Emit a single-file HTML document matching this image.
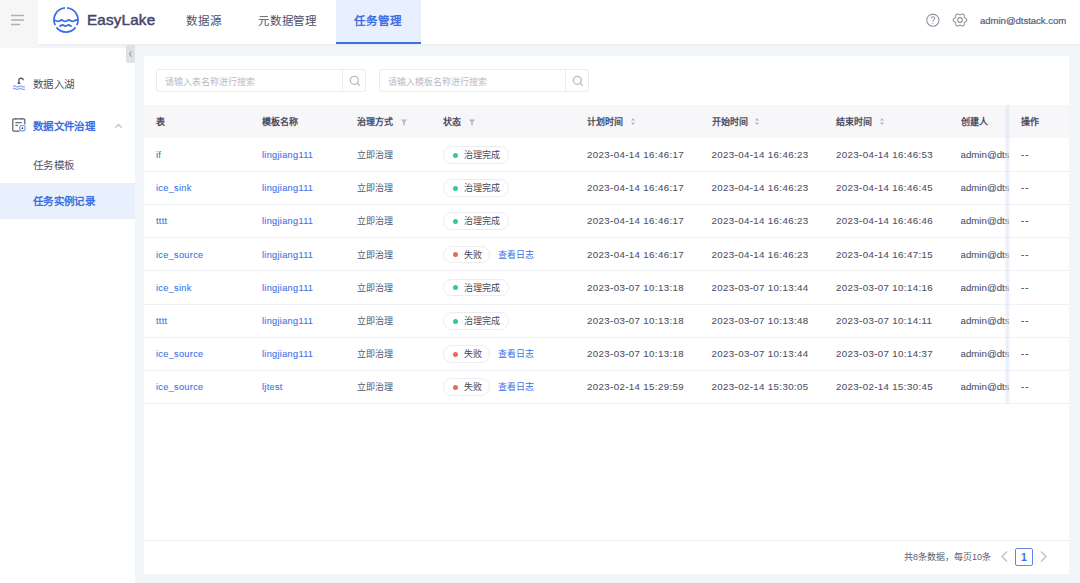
<!DOCTYPE html>
<html lang="zh-CN">
<head>
<meta charset="utf-8">
<style>
*{margin:0;padding:0;box-sizing:border-box;}
html,body{width:1080px;height:583px;overflow:hidden;}
body{background:#f2f6f9;font-family:"Liberation Sans",sans-serif;position:relative;color:#3d3f52;}
.abs{position:absolute;white-space:nowrap;}
#hdr{position:absolute;left:0;top:0;width:1080px;height:44px;background:#fff;}
#hamb{position:absolute;left:0;top:0;width:38px;height:47px;background:#f6f6f7;}
#hamb i{position:absolute;left:11px;height:1.5px;background:#b0b2bb;border-radius:1px;}
.nav{position:absolute;top:0;height:44px;line-height:42.5px;font-size:11.5px;letter-spacing:0.75px;font-weight:500;color:#4f5165;}
#side{position:absolute;left:0;top:48px;width:135px;height:535px;background:#fff;}
#coll{position:absolute;left:126px;top:44.7px;width:9.3px;height:18px;background:#dfe0e6;border-radius:2px;}
#card{position:absolute;left:144px;top:56px;width:925px;height:518px;background:#fff;}
.inp{position:absolute;top:68.5px;height:23.5px;width:210px;border:1px solid #ebecf0;border-radius:3px;background:#fff;}
.inp .ph{position:absolute;left:8px;top:1px;line-height:22px;font-size:9px;font-weight:500;color:#b9bbc5;}
.inp .btn{position:absolute;right:0;top:0;width:23px;height:21.5px;border-left:1px solid #ebecf0;}
#thead{position:absolute;left:144px;top:105px;width:925px;height:33px;background:#f7f7f9;}
.th{position:absolute;font-size:9px;font-weight:bold;color:#494c62;line-height:34px;top:105px;}
.row{position:absolute;left:144px;width:925px;height:33.8px;border-bottom:1px solid #f0f1f4;}
.td{position:absolute;font-size:9.2px;letter-spacing:0.3px;line-height:34px;color:#45475a;white-space:nowrap;-webkit-text-stroke:0.1px currentColor;}
.cn{font-size:9px;letter-spacing:0;font-weight:500;color:#53556a;-webkit-text-stroke:0;}
.blue{color:#3f72e6;}
.tag{position:absolute;top:8px;height:17.5px;border:1px solid #ececf0;border-radius:9px;background:#fff;}
.tag i{position:absolute;left:8.8px;top:5.7px;width:5px;height:5px;border-radius:2.5px;}
.tag span{position:absolute;left:19.5px;top:1px;line-height:15.5px;font-size:9px;font-weight:500;color:#45475c;}
.dt{font-size:9.7px;letter-spacing:0.37px;color:#4e5066;-webkit-text-stroke:0.08px #4e5066;}
.clip{width:48px;overflow:hidden;letter-spacing:0px;}
.side-t{font-size:10.5px;letter-spacing:0.35px;line-height:18px;font-weight:500;}
</style>
</head>
<body>
<div id="hdr"></div>
<div class="abs" style="left:0;top:44px;width:1080px;height:3px;background:linear-gradient(#eaeef1,rgba(242,246,249,0))"></div>
<div id="hamb"><svg style="position:absolute;left:0;top:0" width="38" height="40" viewBox="0 0 38 40"><g stroke="#adafb8" stroke-width="1.5" stroke-linecap="round"><path d="M11.7 15.5 H23.3"/><path d="M11.7 20 H23.3"/><path d="M11.7 24.6 H19.3"/></g></svg></div>

<!-- logo -->
<svg class="abs" style="left:50px;top:4px" width="32" height="32" viewBox="0 0 32 32">
  <g fill="none" stroke="#3a6fe6" stroke-width="1.8" stroke-linecap="butt">
    <path d="M14.95 3.95 A12.05 12.05 0 0 0 5.15 21.2"/>
    <path d="M17.05 3.95 A12.05 12.05 0 0 1 26.85 21.2"/>
    <path d="M6.5 23.4 A12.05 12.05 0 0 0 25.5 23.4"/>
    <path d="M4 16.2 C5.4 16 6.45 17.4 7.8 17.4 S10.2 16 11.5 16 S14 17.4 15.2 17.4 S17.6 16 18.9 16 S21.3 17.4 22.6 17.4 S25 16 26.3 16 S27.5 16.3 28 16.6"/>
    <path d="M9.4 22.2 C10.5 22.2 11.5 21 12.6 21 S14.3 22.2 15.4 22.2 S17.4 21 18.5 21 S20.6 22.2 21.7 22.2"/>
  </g>
</svg>
<div class="abs" style="left:87px;top:9.5px;font-size:15.2px;letter-spacing:0.2px;line-height:20px;font-weight:normal;color:#44476b;-webkit-text-stroke:0.5px #44476b;">EasyLake</div>

<div class="nav" style="left:186px">数据源</div>
<div class="nav" style="left:258px">元数据管理</div>
<div class="abs" style="left:336px;top:0;width:85px;height:44px;background:#e9f0fd;border-bottom:2px solid #3f6fe4;"></div>
<div class="nav" style="left:354px;color:#3f6fe2;font-weight:bold;letter-spacing:1px">任务管理</div>

<!-- right header -->
<svg class="abs" style="left:925px;top:12px" width="16" height="16" viewBox="0 0 16 16">
  <circle cx="7.85" cy="8.2" r="6.1" fill="none" stroke="#9597a3" stroke-width="1.1"/>
  <path d="M6.1 6.4 C6.2 5.3 7 4.7 8 4.7 C9.1 4.7 9.8 5.4 9.8 6.3 C9.8 7.2 9.1 7.6 8.5 8.1 C8.1 8.4 7.9 8.8 7.9 9.5" fill="none" stroke="#9597a3" stroke-width="1.1"/>
  <circle cx="7.85" cy="11.2" r="0.65" fill="#9597a3"/>
</svg>
<svg class="abs" style="left:952px;top:12px" width="16" height="16" viewBox="0 0 16 16">
  <path d="M14.75 8.00 L14.72 8.29 L14.62 8.58 L14.47 8.85 L14.28 9.11 L14.05 9.34 L13.80 9.55 L13.54 9.75 L13.29 9.92 L13.05 10.09 L12.85 10.26 L12.68 10.44 L12.55 10.62 L12.45 10.83 L12.38 11.07 L12.34 11.33 L12.31 11.62 L12.28 11.92 L12.24 12.24 L12.18 12.57 L12.10 12.88 L11.98 13.18 L11.81 13.45 L11.61 13.67 L11.38 13.85 L11.11 13.96 L10.81 14.03 L10.50 14.03 L10.18 13.99 L9.86 13.91 L9.55 13.80 L9.26 13.67 L8.98 13.54 L8.71 13.42 L8.47 13.33 L8.23 13.27 L8.00 13.25 L7.77 13.27 L7.53 13.33 L7.29 13.42 L7.02 13.54 L6.74 13.67 L6.45 13.80 L6.14 13.91 L5.82 13.99 L5.50 14.03 L5.19 14.03 L4.89 13.96 L4.63 13.85 L4.39 13.67 L4.19 13.45 L4.02 13.18 L3.90 12.88 L3.82 12.57 L3.76 12.24 L3.72 11.92 L3.69 11.62 L3.66 11.33 L3.62 11.07 L3.55 10.83 L3.45 10.63 L3.32 10.44 L3.15 10.26 L2.95 10.09 L2.71 9.92 L2.46 9.75 L2.20 9.55 L1.95 9.34 L1.72 9.11 L1.53 8.85 L1.38 8.58 L1.28 8.29 L1.25 8.00 L1.28 7.71 L1.38 7.42 L1.53 7.15 L1.72 6.89 L1.95 6.66 L2.20 6.45 L2.46 6.25 L2.71 6.08 L2.95 5.91 L3.15 5.74 L3.32 5.56 L3.45 5.38 L3.55 5.17 L3.62 4.93 L3.66 4.67 L3.69 4.38 L3.72 4.08 L3.76 3.76 L3.82 3.43 L3.90 3.12 L4.02 2.82 L4.19 2.55 L4.39 2.33 L4.62 2.15 L4.89 2.04 L5.19 1.97 L5.50 1.97 L5.82 2.01 L6.14 2.09 L6.45 2.20 L6.74 2.33 L7.02 2.46 L7.29 2.58 L7.53 2.67 L7.77 2.73 L8.00 2.75 L8.23 2.73 L8.47 2.67 L8.71 2.58 L8.98 2.46 L9.26 2.33 L9.55 2.20 L9.86 2.09 L10.18 2.01 L10.50 1.97 L10.81 1.97 L11.11 2.04 L11.37 2.15 L11.61 2.33 L11.81 2.55 L11.98 2.82 L12.10 3.12 L12.18 3.43 L12.24 3.76 L12.28 4.08 L12.31 4.38 L12.34 4.67 L12.38 4.93 L12.45 5.17 L12.55 5.38 L12.68 5.56 L12.85 5.74 L13.05 5.91 L13.29 6.08 L13.54 6.25 L13.80 6.45 L14.05 6.66 L14.28 6.89 L14.47 7.15 L14.62 7.42 L14.72 7.71 Z" fill="none" stroke="#9597a3" stroke-width="1.15" stroke-linejoin="round"/>
  <circle cx="8" cy="8" r="2.4" fill="none" stroke="#9597a3" stroke-width="1.15"/>
</svg>
<div class="abs" style="left:980px;top:14px;font-size:9.6px;letter-spacing:-0.05px;line-height:14px;color:#5a5c7c;-webkit-text-stroke:0.2px #5a5c7c;">admin@dtstack.com</div>

<div id="side"></div>
<div id="coll"><svg style="position:absolute;left:2px;top:5px" width="5" height="8" viewBox="0 0 5 8"><path d="M3.5 1.3 L1.5 4 L3.5 6.7" fill="none" stroke="#8a8c98" stroke-width="1"/></svg></div>

<!-- sidebar items -->
<svg class="abs" style="left:12px;top:77px" width="14" height="14" viewBox="0 0 14 14">
  <g fill="none" stroke-width="1.2">
    <path d="M6.9 6.4 V3.3 A2.15 2.15 0 0 1 11.2 3.3" stroke="#4d4f64"/>
    <path d="M1 9.4 q1.5 -1 3 0 t3 0 t3 0 t3 0" stroke="#8aaaf0"/>
    <path d="M1 11.9 q1.5 -1 3 0 t3 0 t3 0 t3 0" stroke="#8aaaf0"/>
  </g>
  <rect x="5.7" y="5.2" width="2.5" height="1.8" rx="0.6" fill="#4d4f64"/>
</svg>
<div class="abs side-t" style="left:33px;top:75px;color:#4f5165">数据入湖</div>

<svg class="abs" style="left:12px;top:117px" width="16" height="16" viewBox="0 0 16 16">
  <g fill="none" stroke="#5a5c6e" stroke-width="1.2">
    <path d="M7.6 14.2 H1.8 a1 1 0 0 1 -1 -1 V2.8 a1 1 0 0 1 1 -1 H11.8 a1 1 0 0 1 1 1 V7.6"/>
    <path d="M3.8 1 V2.6 M9.6 1 V2.6" stroke-width="1.1"/>
    <path d="M3.4 5.7 H9.8 M3.4 8.3 H6.2" stroke="#6a6c7c"/>
  </g>
  <circle cx="10.4" cy="11.2" r="2.8" fill="#fff" stroke="#86a8f0" stroke-width="1.3"/>
  <circle cx="10.4" cy="11.2" r="0.9" fill="#4d4f64"/>
</svg>
<div class="abs side-t" style="left:33px;top:117px;color:#3d6fe3;font-weight:bold">数据文件治理</div>
<svg class="abs" style="left:113.5px;top:123px" width="9" height="6" viewBox="0 0 9 6"><path d="M1.3 4.6 L4.5 1.6 L7.7 4.6" fill="none" stroke="#b4b6c0" stroke-width="1.1"/></svg>

<div class="abs side-t" style="left:33px;top:156px;color:#4f5165">任务模板</div>
<div class="abs" style="left:0;top:183px;width:135px;height:36px;background:#e9f0fd"></div>
<div class="abs side-t" style="left:33px;top:192px;color:#3d6fe3;font-weight:bold">任务实例记录</div>

<div id="card"></div>
<div class="inp" style="left:156px"><span class="ph">请输入表名称进行搜索</span><div class="btn"><svg style="position:absolute;left:5.5px;top:5.5px" width="12" height="12" viewBox="0 0 12 12"><circle cx="5.3" cy="5.3" r="4" fill="none" stroke="#b9bbc4" stroke-width="1.3"/><path d="M8.2 8.2 L10.3 10.3" stroke="#b9bbc4" stroke-width="1.3" stroke-linecap="round"/></svg></div></div>
<div class="inp" style="left:379px"><span class="ph">请输入模板名称进行搜索</span><div class="btn"><svg style="position:absolute;left:5.5px;top:5.5px" width="12" height="12" viewBox="0 0 12 12"><circle cx="5.3" cy="5.3" r="4" fill="none" stroke="#b9bbc4" stroke-width="1.3"/><path d="M8.2 8.2 L10.3 10.3" stroke="#b9bbc4" stroke-width="1.3" stroke-linecap="round"/></svg></div></div>
<div id="thead"></div>
<div class="th" style="left:156px">表</div>
<div class="th" style="left:262px">模板名称</div>
<div class="th" style="left:357px">治理方式</div>
<div class="th" style="left:443px">状态</div>
<div class="th" style="left:587px">计划时间</div>
<div class="th" style="left:711.5px">开始时间</div>
<div class="th" style="left:836px">结束时间</div>
<div class="th" style="left:960.5px">创建人</div>
<div class="th" style="left:1021px">操作</div>
<svg class="abs" style="left:399.5px;top:118px" width="8" height="9" viewBox="0 0 8 9"><path d="M1 1.5 H7 L4.8 4.3 V7.6 L3.2 7 V4.3 Z" fill="#b5b7c2"/></svg>
<svg class="abs" style="left:467.5px;top:118px" width="8" height="9" viewBox="0 0 8 9"><path d="M1 1.5 H7 L4.8 4.3 V7.6 L3.2 7 V4.3 Z" fill="#b5b7c2"/></svg>
<svg class="abs" style="left:629.5px;top:117px" width="6" height="9" viewBox="0 0 6 9"><path d="M3 1 L5 3.4 H1 Z M3 8 L5 5.6 H1 Z" fill="#b5b7c2"/></svg>
<svg class="abs" style="left:754px;top:117px" width="6" height="9" viewBox="0 0 6 9"><path d="M3 1 L5 3.4 H1 Z M3 8 L5 5.6 H1 Z" fill="#b5b7c2"/></svg>
<svg class="abs" style="left:879px;top:117px" width="6" height="9" viewBox="0 0 6 9"><path d="M3 1 L5 3.4 H1 Z M3 8 L5 5.6 H1 Z" fill="#b5b7c2"/></svg>
<div class="row" style="top:138.0px"><div class="td blue" style="left:12px">if</div><div class="td blue" style="left:118px">lingjiang111</div><div class="td cn" style="left:213px">立即治理</div><div class="tag" style="left:299px;width:65.5px"><i style="background:#33c6a2"></i><span>治理完成</span></div><div class="td dt" style="left:443px">2023-04-14 16:46:17</div><div class="td dt" style="left:567.5px">2023-04-14 16:46:23</div><div class="td dt" style="left:692px">2023-04-14 16:46:53</div><div class="td dt clip" style="left:816.5px">admin@dtstack.com</div><div class="td" style="left:877px;letter-spacing:1px;font-size:9.5px">--</div></div>
<div class="row" style="top:171.2px"><div class="td blue" style="left:12px">ice_sink</div><div class="td blue" style="left:118px">lingjiang111</div><div class="td cn" style="left:213px">立即治理</div><div class="tag" style="left:299px;width:65.5px"><i style="background:#33c6a2"></i><span>治理完成</span></div><div class="td dt" style="left:443px">2023-04-14 16:46:17</div><div class="td dt" style="left:567.5px">2023-04-14 16:46:23</div><div class="td dt" style="left:692px">2023-04-14 16:46:45</div><div class="td dt clip" style="left:816.5px">admin@dtstack.com</div><div class="td" style="left:877px;letter-spacing:1px;font-size:9.5px">--</div></div>
<div class="row" style="top:204.4px"><div class="td blue" style="left:12px">tttt</div><div class="td blue" style="left:118px">lingjiang111</div><div class="td cn" style="left:213px">立即治理</div><div class="tag" style="left:299px;width:65.5px"><i style="background:#33c6a2"></i><span>治理完成</span></div><div class="td dt" style="left:443px">2023-04-14 16:46:17</div><div class="td dt" style="left:567.5px">2023-04-14 16:46:23</div><div class="td dt" style="left:692px">2023-04-14 16:46:46</div><div class="td dt clip" style="left:816.5px">admin@dtstack.com</div><div class="td" style="left:877px;letter-spacing:1px;font-size:9.5px">--</div></div>
<div class="row" style="top:237.6px"><div class="td blue" style="left:12px">ice_source</div><div class="td blue" style="left:118px">lingjiang111</div><div class="td cn" style="left:213px">立即治理</div><div class="tag" style="left:299px;width:47px"><i style="background:#ea6a55"></i><span>失败</span></div><div class="td cn blue" style="left:353.5px">查看日志</div><div class="td dt" style="left:443px">2023-04-14 16:46:17</div><div class="td dt" style="left:567.5px">2023-04-14 16:46:23</div><div class="td dt" style="left:692px">2023-04-14 16:47:15</div><div class="td dt clip" style="left:816.5px">admin@dtstack.com</div><div class="td" style="left:877px;letter-spacing:1px;font-size:9.5px">--</div></div>
<div class="row" style="top:270.8px"><div class="td blue" style="left:12px">ice_sink</div><div class="td blue" style="left:118px">lingjiang111</div><div class="td cn" style="left:213px">立即治理</div><div class="tag" style="left:299px;width:65.5px"><i style="background:#33c6a2"></i><span>治理完成</span></div><div class="td dt" style="left:443px">2023-03-07 10:13:18</div><div class="td dt" style="left:567.5px">2023-03-07 10:13:44</div><div class="td dt" style="left:692px">2023-03-07 10:14:16</div><div class="td dt clip" style="left:816.5px">admin@dtstack.com</div><div class="td" style="left:877px;letter-spacing:1px;font-size:9.5px">--</div></div>
<div class="row" style="top:304.0px"><div class="td blue" style="left:12px">tttt</div><div class="td blue" style="left:118px">lingjiang111</div><div class="td cn" style="left:213px">立即治理</div><div class="tag" style="left:299px;width:65.5px"><i style="background:#33c6a2"></i><span>治理完成</span></div><div class="td dt" style="left:443px">2023-03-07 10:13:18</div><div class="td dt" style="left:567.5px">2023-03-07 10:13:48</div><div class="td dt" style="left:692px">2023-03-07 10:14:11</div><div class="td dt clip" style="left:816.5px">admin@dtstack.com</div><div class="td" style="left:877px;letter-spacing:1px;font-size:9.5px">--</div></div>
<div class="row" style="top:337.2px"><div class="td blue" style="left:12px">ice_source</div><div class="td blue" style="left:118px">lingjiang111</div><div class="td cn" style="left:213px">立即治理</div><div class="tag" style="left:299px;width:47px"><i style="background:#ea6a55"></i><span>失败</span></div><div class="td cn blue" style="left:353.5px">查看日志</div><div class="td dt" style="left:443px">2023-03-07 10:13:18</div><div class="td dt" style="left:567.5px">2023-03-07 10:13:44</div><div class="td dt" style="left:692px">2023-03-07 10:14:37</div><div class="td dt clip" style="left:816.5px">admin@dtstack.com</div><div class="td" style="left:877px;letter-spacing:1px;font-size:9.5px">--</div></div>
<div class="row" style="top:370.4px"><div class="td blue" style="left:12px">ice_source</div><div class="td blue" style="left:118px">ljtest</div><div class="td cn" style="left:213px">立即治理</div><div class="tag" style="left:299px;width:47px"><i style="background:#ea6a55"></i><span>失败</span></div><div class="td cn blue" style="left:353.5px">查看日志</div><div class="td dt" style="left:443px">2023-02-14 15:29:59</div><div class="td dt" style="left:567.5px">2023-02-14 15:30:05</div><div class="td dt" style="left:692px">2023-02-14 15:30:45</div><div class="td dt clip" style="left:816.5px">admin@dtstack.com</div><div class="td" style="left:877px;letter-spacing:1px;font-size:9.5px">--</div></div>
<div class="abs" style="left:1003.5px;top:105px;width:6.5px;height:298.5px;background:linear-gradient(to right,rgba(225,232,248,0),rgba(220,229,248,0.7) 60%,rgba(225,232,248,0.2))"></div>
<div class="abs" style="left:144px;top:539.5px;width:925px;height:1px;background:#f0f1f4"></div>
<div class="abs" style="left:904px;top:550px;font-size:9px;line-height:14px;color:#5b5d70;font-weight:500">共8条数据，每页10条</div>
<svg class="abs" style="left:1000px;top:550px" width="9" height="13" viewBox="0 0 9 13"><path d="M7 1.5 L2 6.5 L7 11.5" fill="none" stroke="#b8bac4" stroke-width="1.1"/></svg>
<div class="abs" style="left:1015px;top:548px;width:18px;height:18px;border:1px solid #5f88ea;border-radius:2px;text-align:center;line-height:16px;font-size:10.5px;font-weight:bold;color:#3d6fe3">1</div>
<svg class="abs" style="left:1039px;top:550px" width="9" height="13" viewBox="0 0 9 13"><path d="M2 1.5 L7 6.5 L2 11.5" fill="none" stroke="#b8bac4" stroke-width="1.1"/></svg>
</body>
</html>
